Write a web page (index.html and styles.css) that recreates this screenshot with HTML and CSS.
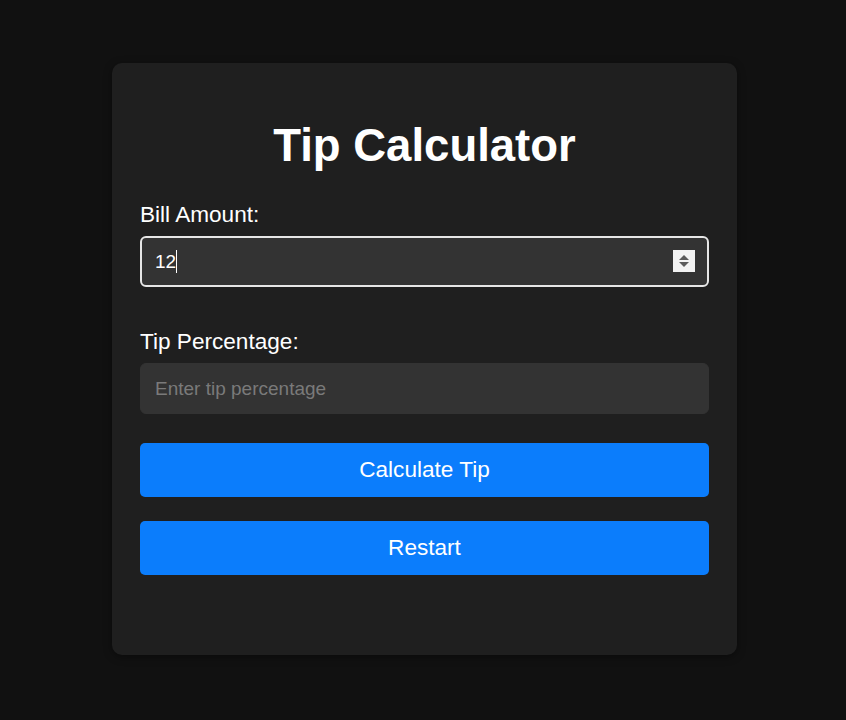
FILE: index.html
```html
<!DOCTYPE html>
<html lang="en">
<head>
<meta charset="utf-8">
<title>Tip Calculator</title>
<link rel="stylesheet" href="styles.css">
</head>
<body>
<main class="card">
  <h1 class="title">Tip Calculator</h1>
  <label class="label" for="bill">Bill Amount:</label>
  <div class="field field-focus">
    <input id="bill" class="input" type="text" value="12">
    <span class="caret"></span>
    <span class="spinner">
      <svg width="22" height="22" viewBox="0 0 22 22"><polygon points="11,5 16,10 6,10" fill="#5a5a5a"/><polygon points="6,12 16,12 11,17" fill="#5a5a5a"/></svg>
    </span>
  </div>
  <label class="label label-second" for="tip">Tip Percentage:</label>
  <div class="field">
    <input id="tip" class="input" type="text" placeholder="Enter tip percentage">
  </div>
  <button class="btn btn-first" type="button">Calculate Tip</button>
  <button class="btn btn-second" type="button">Restart</button>
</main>
</body>
</html>
```

FILE: styles.css
```css
html, body {
  margin: 0;
  padding: 0;
}
body {
  background: #111111;
  font-family: "Liberation Sans", Arial, sans-serif;
  display: flex;
  justify-content: center;
  padding-left: 3px;
  padding-top: 63px;
  min-height: 720px;
  box-sizing: border-box;
}
.card {
  width: 625px;
  height: 592px;
  box-sizing: border-box;
  background: #1f1f1f;
  border-radius: 10px;
  box-shadow: 0 2px 8px rgba(0,0,0,0.4);
  padding: 57px 28px 0 28px;
  display: flex;
  flex-direction: column;
}
.title {
  margin: 0;
  color: #ffffff;
  font-size: 45.5px;
  font-weight: 700;
  line-height: 52px;
  text-align: center;
}
.label {
  display: block;
  margin-top: 30px;
  color: #ffffff;
  font-size: 22.6px;
  line-height: 26px;
}
.label-second {
  margin-top: 42px;
}
.field {
  position: relative;
  margin-top: 8px;
  height: 51px;
}
.input {
  width: 100%;
  height: 51px;
  box-sizing: border-box;
  background: #333333;
  border: 1px solid #333333;
  border-radius: 6px;
  color: #ffffff;
  font-family: "Liberation Sans", Arial, sans-serif;
  font-size: 19px;
  padding: 0 14px;
  outline: none;
  display: block;
}
.input::placeholder {
  color: #7a7a7a;
}
.field-focus .input {
  border: 2px solid #e6e6e6;
  padding: 0 13px;
}
.caret {
  position: absolute;
  left: 36px;
  top: 14px;
  width: 1px;
  height: 23px;
  background: #ffffff;
}
.spinner {
  position: absolute;
  left: 533px;
  top: 14px;
  width: 22px;
  height: 22px;
  background: #f2f2f2;
  display: block;
}
.spinner svg {
  display: block;
}
.btn {
  display: block;
  width: 100%;
  height: 54px;
  border: none;
  border-radius: 5px;
  background: #0b7dfc;
  color: #ffffff;
  font-family: "Liberation Sans", Arial, sans-serif;
  font-size: 22.6px;
  cursor: pointer;
}
.btn-first {
  margin-top: 29px;
}
.btn-second {
  margin-top: 24px;
}
```
